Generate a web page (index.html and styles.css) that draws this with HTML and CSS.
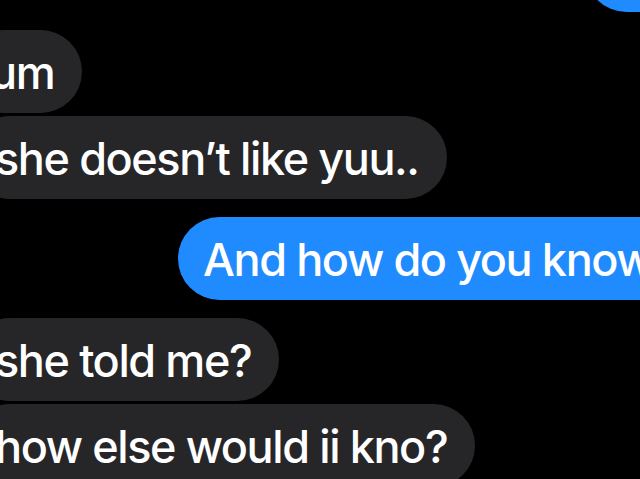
FILE: index.html
```html
<!DOCTYPE html>
<html lang="en">
<head>
    <meta charset="UTF-8">
    <title>Messages</title>
    <link rel="stylesheet" href="styles.css">
</head>
<body>
    <div class="thread">
        <div class="bubble sent first">&nbsp;</div>

        <div class="bubble received tight">um</div>
        <div class="bubble received next">she doesn’t like yuu..</div>

        <div class="bubble sent">And how do you know</div>

        <div class="bubble received">she told me?</div>
        <div class="bubble received next">how else would ii kno?</div>
    </div>
</body>
</html>
```

FILE: styles.css
```css
body {
    margin: 0;
    background: #000;
    font-family: Inter, 'Noto Sans', sans-serif;
    overflow: hidden;
    height: 479px;
}

.thread {
    display: flex;
    flex-direction: column;
    align-items: flex-start;
}

.bubble {
    box-sizing: border-box;
    height: 83px;
    padding: 14px 28px 12px 26px;
    border-radius: 42px;
    font-size: 45px;
    font-weight: 500;
    letter-spacing: -1.4px;
    line-height: 57px;
    color: #fff;
    white-space: nowrap;
    margin-top: 18px;
}

.bubble.next {
    margin-top: 3px;
}

.received {
    background: #262628;
    margin-left: -31px;
}

.received.tight {
    margin-left: -36px;
}

.sent {
    background: #208bfe;
    margin-left: 178px;
    padding-left: 25px;
}

.sent.first {
    margin-top: -71px;
    margin-left: 585px;
    width: 120px;
}
```
